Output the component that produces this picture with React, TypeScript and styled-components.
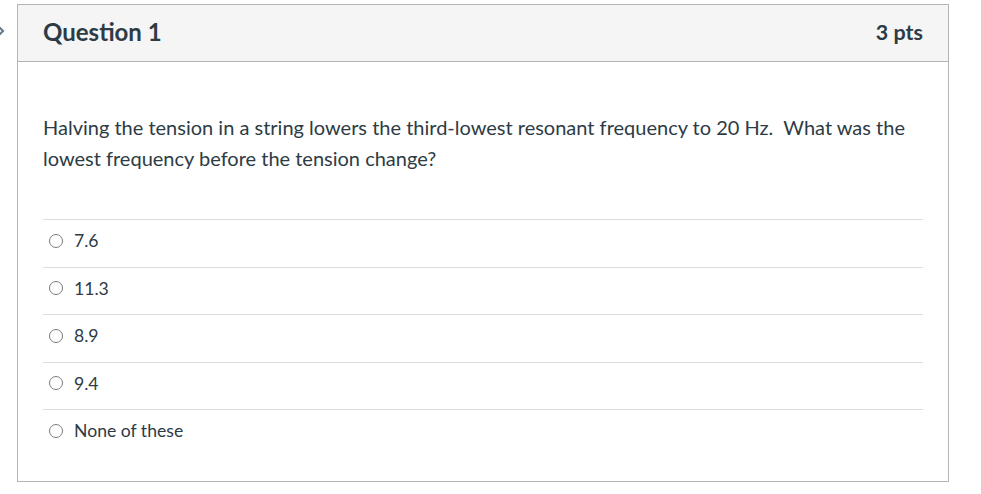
import React from 'react';
import styled, { createGlobalStyle } from 'styled-components';

const GlobalStyle = createGlobalStyle`
  html, body {
    margin: 0;
    padding: 0;
    background: #ffffff;
    font-family: Lato, "Open Sans", "Liberation Sans", sans-serif;
    color: #2d3b45;
  }
`;

const Page = styled.div`
  position: relative;
  padding: 4px 0 0 17px;
  width: 932px;
`;

const Chevron = styled.svg`
  position: absolute;
  left: -3px;
  top: 23px;
`;

const Card = styled.div`
  border: 1px solid #b4b4b4;
  background: #ffffff;
  height: 478px;
  box-sizing: border-box;
`;

const Header = styled.div`
  display: flex;
  justify-content: space-between;
  align-items: center;
  height: 57px;
  box-sizing: border-box;
  padding: 0 25px 3px;
  background: #f5f5f5;
  border-bottom: 1px solid #b4b4b4;
`;

const Title = styled.h2`
  margin: 0;
  font-size: 24px;
  font-weight: 700;
  color: #2d3b45;
`;

const Points = styled.span`
  font-size: 21.5px;
  font-weight: 700;
  color: #2d3b45;
`;

const Body = styled.div`
  padding: 50px 25px 0;
`;

const QuestionText = styled.p`
  margin: 0 0 45px;
  font-size: 20px;
  line-height: 31px;
  color: #2d3b45;
`;

const Answers = styled.div`
  display: flex;
  flex-direction: column;
`;

const Answer = styled.label`
  display: flex;
  align-items: center;
  gap: 11px;
  height: 47.5px;
  box-sizing: border-box;
  padding: 0 0 5px 6px;
  border-top: 1px solid #dcdcdc;
  font-size: 17.6px;
  color: #2d3b45;
`;

const Radio = styled.span`
  width: 14px;
  height: 14px;
  border: 1.3px solid #7c7c7c;
  border-radius: 50%;
  box-sizing: border-box;
  background: #fff;
`;

const options = ['7.6', '11.3', '8.9', '9.4', 'None of these'];

export default function App() {
  return (
    <Page>
      <GlobalStyle />
      <Chevron width="10" height="16" viewBox="0 0 10 16">
        <path d="M0 2 L6 8 L0 14" fill="none" stroke="#6b7c88" strokeWidth="2.2" />
      </Chevron>
      <Card>
        <Header>
          <Title>Question 1</Title>
          <Points>3 pts</Points>
        </Header>
        <Body>
          <QuestionText>
            Halving the tension in a string lowers the third-lowest resonant frequency to 20 Hz.&nbsp; What was the lowest frequency before the tension change?
          </QuestionText>
          <Answers>
            {options.map((o) => (
              <Answer key={o}>
                <Radio />
                {o}
              </Answer>
            ))}
          </Answers>
        </Body>
      </Card>
    </Page>
  );
}
